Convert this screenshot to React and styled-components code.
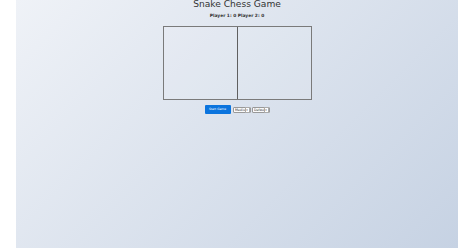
import React from 'react'
import styled, { createGlobalStyle } from 'styled-components'

const GlobalStyle = createGlobalStyle`
  html, body {
    margin: 0;
    padding: 0;
    background: #ffffff;
  }
  body {
    font-family: "DejaVu Sans", "Liberation Sans", sans-serif;
  }
`

const Page = styled.div`
  width: 442px;
  min-height: 248px;
  margin: 0 auto;
  background: linear-gradient(135deg, #eff2f7 0%, #c6d2e3 100%);
  display: flex;
  flex-direction: column;
  align-items: center;
  color: #333;
`

const Title = styled.h1`
  margin: -1px 0 0 0;
  font-size: 9.1px;
  font-weight: normal;
  line-height: 11px;
`

const Score = styled.div`
  margin-top: 3px;
  font-size: 4.4px;
  font-weight: bold;
  line-height: 6px;
`

const Board = styled.div`
  margin-top: 7px;
  display: flex;
  border: 1px solid #7a7a7a;
`

const Cell = styled.div`
  width: 73px;
  height: 72px;
  background: rgba(255, 255, 255, 0.08);
  border-left: ${props => (props.first ? 'none' : '1.5px solid #606060')};
`

const Controls = styled.div`
  margin-top: 5px;
  display: flex;
  align-items: center;
  gap: 1px;
`

const StartButton = styled.button`
  width: 26px;
  height: 9px;
  padding: 0;
  margin-right: 1px;
  border: none;
  border-radius: 1px;
  background: #0b74de;
  color: #fff;
  font-family: inherit;
  font-size: 3px;
  line-height: 9px;
`

const SelectWrap = styled.div`
  position: relative;
  width: ${props => props.w}px;
  height: 6px;
  &::after {
    content: '▾';
    position: absolute;
    right: 1px;
    top: 0.5px;
    width: 3px;
    height: 4px;
    font-size: 3px;
    line-height: 4px;
    text-align: center;
    color: #555;
    border: 0.3px solid #aaa;
    border-radius: 0.5px;
    background: #fff;
    pointer-events: none;
  }
`

const Select = styled.select`
  appearance: none;
  -webkit-appearance: none;
  display: block;
  width: 100%;
  height: 6px;
  margin: 0;
  padding: 0 0 0 1.5px;
  border: 0.5px solid #999;
  border-radius: 1px;
  background: #fafafa;
  color: #333;
  font-family: inherit;
  font-size: 3.3px;
  line-height: 5px;
`

export default function App() {
  return (
    <>
      <GlobalStyle />
      <Page>
        <Title>Snake Chess Game</Title>
        <Score>Player 1: 0 Player 2: 0</Score>
        <Board>
          <Cell first />
          <Cell />
        </Board>
        <Controls>
          <StartButton>Start Game</StartButton>
          <SelectWrap w={18}>
            <Select defaultValue="medium">
              <option value="easy">Easy</option>
              <option value="medium">Medium</option>
              <option value="hard">Hard</option>
            </Select>
          </SelectWrap>
          <SelectWrap w={18}>
            <Select defaultValue="default">
              <option value="default">Default</option>
            </Select>
          </SelectWrap>
        </Controls>
      </Page>
    </>
  )
}
